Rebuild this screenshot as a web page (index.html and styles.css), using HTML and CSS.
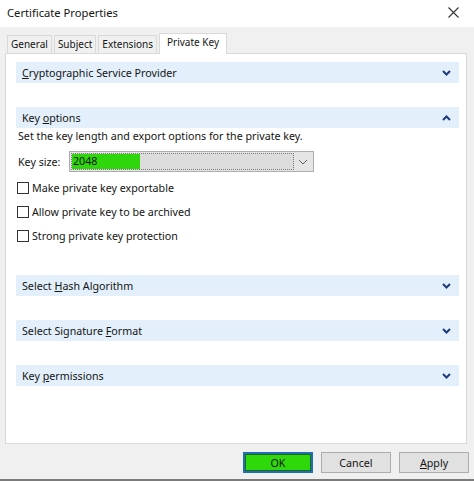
FILE: index.html
```html
<!DOCTYPE html>
<html lang="en-US">

<head>
	<title>Certificate Properties</title>
	<meta charset="utf-8">
	<meta name="viewport" content="width=device-width, initial-scale=1.0">
	<link rel="stylesheet" href="styles.css">
</head>

<body>

	<div class="window">

		<!-- Title bar -->
		<div class="titlebar">
			<span class="title">Certificate Properties</span>
			<svg class="close" width="11" height="11" viewBox="0 0 11 11">
				<path d="M0.5 0.5 L10.5 10.5 M10.5 0.5 L0.5 10.5" stroke="#333" stroke-width="1.1" fill="none" />
			</svg>
		</div>

		<div class="body">

			<!-- Tabs -->
			<div class="tabs">
				<div class="tab">General</div>
				<div class="tab">Subject</div>
				<div class="tab">Extensions</div>
				<div class="tab tab-active">Private Key</div>
			</div>

			<!-- Tab panel -->
			<div class="panel">

				<div class="group">
					<div class="group-head">
						<span><u>C</u>ryptographic Service Provider</span>
						<svg class="chevron" width="9" height="6" viewBox="0 0 9 6">
							<path d="M1 1 L4.5 4.5 L8 1" stroke="#1d3c78" stroke-width="2" fill="none" />
						</svg>
					</div>
				</div>

				<div class="group group-open">
					<div class="group-head">
						<span>Key <u>o</u>ptions</span>
						<svg class="chevron" width="9" height="6" viewBox="0 0 9 6">
							<path d="M1 5 L4.5 1.5 L8 5" stroke="#1d3c78" stroke-width="2" fill="none" />
						</svg>
					</div>
					<div class="group-body">
						<p class="hint">Set the key length and export options for the private key.</p>
						<div class="field">
							<label class="field-label">Key size:</label>
							<div class="select">
								<div class="select-value"><span class="marked">2048</span></div>
								<svg class="select-arrow" width="10" height="6" viewBox="0 0 10 6">
									<path d="M1 1 L5 5 L9 1" stroke="#666" stroke-width="1" fill="none" />
								</svg>
							</div>
						</div>
						<label class="check"><span class="box"></span>Make private key exportable</label>
						<label class="check"><span class="box"></span>Allow private key to be archived</label>
						<label class="check"><span class="box"></span>Strong private key protection</label>
					</div>
				</div>

				<div class="group">
					<div class="group-head">
						<span>Select <u>H</u>ash Algorithm</span>
						<svg class="chevron" width="9" height="6" viewBox="0 0 9 6">
							<path d="M1 1 L4.5 4.5 L8 1" stroke="#1d3c78" stroke-width="2" fill="none" />
						</svg>
					</div>
				</div>

				<div class="group">
					<div class="group-head">
						<span>Select Signature <u>F</u>ormat</span>
						<svg class="chevron" width="9" height="6" viewBox="0 0 9 6">
							<path d="M1 1 L4.5 4.5 L8 1" stroke="#1d3c78" stroke-width="2" fill="none" />
						</svg>
					</div>
				</div>

				<div class="group">
					<div class="group-head">
						<span>Key <u>p</u>ermissions</span>
						<svg class="chevron" width="9" height="6" viewBox="0 0 9 6">
							<path d="M1 1 L4.5 4.5 L8 1" stroke="#1d3c78" stroke-width="2" fill="none" />
						</svg>
					</div>
				</div>

			</div>

			<!-- Dialog buttons -->
			<div class="buttons">
				<button class="btn btn-ok">OK</button>
				<button class="btn">Cancel</button>
				<button class="btn"><u>A</u>pply</button>
			</div>

		</div>
	</div>

</body>

</html>
```

FILE: styles.css
```css
*,
*:before,
*:after {
	box-sizing: border-box;
}

/**
 * Layout
 */
body {
	margin: 0;
	background-color: #f0f0f0;
	font-family: "Noto Sans", "Open Sans", sans-serif;
	font-size: 10.7px;
	color: #141414;
}

.window {
	width: 474px;
	height: 481px;
	display: flex;
	flex-direction: column;
	border-bottom: 2px solid #7b7b7b;
}

.titlebar {
	height: 27px;
	background-color: #ffffff;
	display: flex;
	align-items: center;
	justify-content: space-between;
	padding: 0 15px 3px 7px;
	font-size: 11.2px;
}

.body {
	flex: 1;
	display: flex;
	flex-direction: column;
	padding: 6px 7px 0 5px;
}

/**
 * Tabs
 */
.tabs {
	display: flex;
	align-items: flex-end;
	padding-left: 2px;
	height: 20px;
	position: relative;
	z-index: 1;
	font-size: 10px;
}

.tab {
	height: 18px;
	padding: 0 3px;
	line-height: 17px;
	border: 1px solid #d9d9d9;
	border-bottom: 0;
	margin-right: 2px;
	background-color: #f0f0f0;
}

.tab-active {
	height: 21px;
	padding: 0 7px;
	background-color: #ffffff;
	line-height: 17px;
	margin-bottom: -1px;
}

.panel {
	height: 391px;
	background-color: #ffffff;
	border: 1px solid #d9d9d9;
	padding: 8px 7px 0 10px;
}

/**
 * Collapsible groups
 */
.group {
	margin-bottom: 24px;
}

.group-open {
	margin-bottom: 27px;
}

.group-head {
	height: 21px;
	display: flex;
	align-items: center;
	justify-content: space-between;
	padding: 0 8px 0 6px;
	background-color: #e3f0fb;
}

.group-body {
	padding-left: 2px;
}

.hint {
	margin: 1px 0 0;
	line-height: 15px;
}

.field {
	display: flex;
	align-items: center;
	margin-top: 7px;
	margin-bottom: 4px;
}

.field-label {
	width: 51px;
}

.select {
	width: 245px;
	height: 21px;
	display: flex;
	align-items: center;
	background-color: #e5e5e5;
	border: 1px solid #adadad;
}

.select-value {
	flex: 1;
	height: 17px;
	margin-left: 1px;
	border: 1px dotted #7a7a7a;
	background-color: #dcdcdc;
	display: flex;
}

.marked {
	width: 68px;
	background-color: #30d60c;
	line-height: 15px;
	padding-left: 1px;
}

.select-arrow {
	margin: 0 5px 0 4px;
}

.check {
	display: flex;
	align-items: center;
	height: 24px;
}

.box {
	width: 12px;
	height: 12px;
	border: 1px solid #333333;
	background-color: #ffffff;
	margin: 0 3px 0 -1px;
}

/**
 * Buttons
 */
.buttons {
	display: flex;
	justify-content: flex-end;
	gap: 8px;
	padding-top: 8px;
	margin-right: -2px;
}

.btn {
	width: 70px;
	height: 21px;
	font-family: inherit;
	font-size: 10.7px;
	color: #141414;
	background-color: #e1e1e1;
	border: 1px solid #adadad;
	padding: 0;
}

.btn-ok {
	background-color: #2fd80b;
	border: 2px solid #1f6fb8;
	box-shadow: inset 0 0 0 1px #1d6a1a;
}
```
